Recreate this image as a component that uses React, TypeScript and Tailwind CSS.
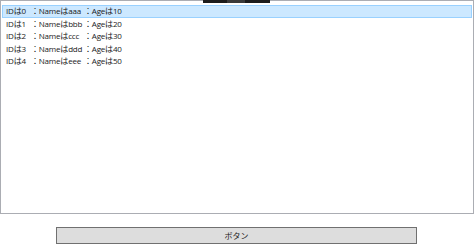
import React from 'react';

const people = [
  { id: 0, name: 'aaa', age: 10 },
  { id: 1, name: 'bbb', age: 20 },
  { id: 2, name: 'ccc', age: 30 },
  { id: 3, name: 'ddd', age: 40 },
  { id: 4, name: 'eee', age: 50 },
];

export default function App() {
  return (
    <div
      className="relative w-[474px] h-[248px] bg-white text-[#1a1a1a]"
      style={{ fontFamily: '"Open Sans", "Noto Sans CJK JP", sans-serif' }}
    >
      {/* debug toolbar peeking over the top */}
      <div className="absolute left-[203px] top-0 w-[67px] h-[3px] bg-[#1c1c1c] flex">
        <div className="ml-[24px] w-[18px] h-full bg-[#3a3a3a]" />
      </div>

      <div className="w-[474px] h-[214px] border border-[#abadb3] pt-[4px] px-[1px]">
        {people.map((p, i) => (
          <div
            key={p.id}
            className={
              'h-[12.5px] flex items-center pl-[3px] text-[8px] leading-none whitespace-pre border tracking-[-0.2px] ' +
              (i === 0 ? 'bg-[#cce8ff] border-[#99d1ff]' : 'border-transparent')
            }
          >
            <span className="w-[25px]">IDは{p.id}</span>
            <span className="w-[53px]">：Nameは{p.name}</span>
            <span>：Ageは{p.age}</span>
          </div>
        ))}
      </div>

      <div className="flex justify-center pt-[13px]">
        <button className="ml-[-1px] w-[361px] h-[17px] bg-[#dddddd] border border-[#707070] text-[8px] leading-none text-[#1a1a1a]">
          ボタン
        </button>
      </div>
    </div>
  );
}
